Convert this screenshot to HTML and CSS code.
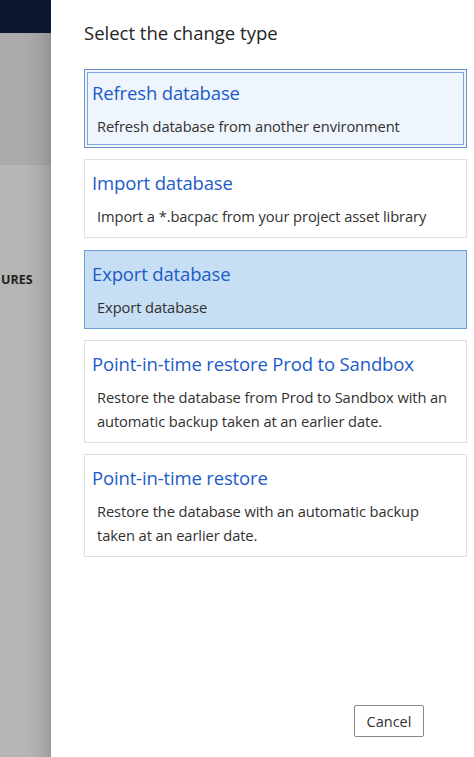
FILE: index.html
```html
<!DOCTYPE html>
<html lang="en">
<head>
<meta charset="utf-8">
<title>Select the change type</title>
<link rel="stylesheet" href="styles.css">
</head>
<body>
<div class="page">
  <aside class="backdrop">
    <div class="bd-top"></div>
    <div class="bd-mid"></div>
    <div class="bd-low">
      <div class="bd-label">URES</div>
    </div>
  </aside>
  <main class="panel">
    <h1 class="heading">Select the change type</h1>
    <div class="options">
      <div class="option focused">
        <div class="opt-title">Refresh database</div>
        <div class="opt-desc">Refresh database from another environment</div>
      </div>
      <div class="option">
        <div class="opt-title">Import database</div>
        <div class="opt-desc">Import a *.bacpac from your project asset library</div>
      </div>
      <div class="option selected">
        <div class="opt-title">Export database</div>
        <div class="opt-desc">Export database</div>
      </div>
      <div class="option">
        <div class="opt-title">Point-in-time restore Prod to Sandbox</div>
        <div class="opt-desc">Restore the database from Prod to Sandbox with an automatic backup taken at an earlier date.</div>
      </div>
      <div class="option">
        <div class="opt-title">Point-in-time restore</div>
        <div class="opt-desc">Restore the database with an automatic backup taken at an earlier date.</div>
      </div>
    </div>
    <div class="footer">
      <button class="btn">Cancel</button>
    </div>
  </main>
</div>
</body>
</html>
```

FILE: styles.css
```css
html, body {
  margin: 0;
  padding: 0;
  height: 100%;
}
body {
  font-family: "Open Sans", "Noto Sans", "Liberation Sans", sans-serif;
  color: #323130;
  background: #fff;
  overflow: hidden;
}
.page {
  display: flex;
  height: 757px;
}
.backdrop {
  width: 51px;
  flex: none;
  display: flex;
  flex-direction: column;
  position: relative;
}
.backdrop::after {
  content: "";
  position: absolute;
  inset: 33px 0 0 0;
  background: linear-gradient(to right, rgba(0,0,0,0) 0%, rgba(0,0,0,0) 55%, rgba(0,0,0,0.07) 85%, rgba(0,0,0,0.14) 100%);
  pointer-events: none;
}
.bd-top {
  height: 33px;
  background: #0c1832;
}
.bd-mid {
  height: 132px;
  background: #abaaaa;
}
.bd-low {
  flex: 1;
  background: #b5b5b5;
  padding-top: 106px;
}
.bd-label {
  padding-left: 1px;
  white-space: nowrap;
  font-size: 12.5px;
  font-weight: 700;
  color: #1f1f1f;
  line-height: 18px;
}
.panel {
  flex: 1;
  display: flex;
  flex-direction: column;
  padding: 0 7px 0 33px;
}
.heading {
  margin: 20px 0 0 0;
  font-size: 18.5px;
  font-weight: 400;
  line-height: 26px;
  color: #252423;
}
.options {
  margin-top: 23px;
  display: flex;
  flex-direction: column;
  gap: 11.3px;
}
.option {
  border: 1px solid #e1dfdd;
  background: #fff;
  padding: 10px 14px 9px 7px;
}
.option.focused {
  background: #eef5fd;
  border-color: #6c8fc6;
  box-shadow: inset 0 0 0 2px #eef5fd, inset 0 0 0 3px #7ea4df;
}
.option.selected {
  background: #c7dff4;
  border-color: #6b9fd6;
}
.opt-title {
  font-size: 18.5px;
  line-height: 26px;
  color: #1d5bc8;
  letter-spacing: -0.15px;
  white-space: nowrap;
}
.opt-desc {
  margin-top: 8px;
  padding-left: 5px;
  font-size: 14.7px;
  line-height: 24px;
  color: #323130;
  letter-spacing: -0.1px;
}
.footer {
  margin-top: auto;
  margin-bottom: 20px;
  display: flex;
  justify-content: flex-end;
  padding-right: 43px;
}
.btn {
  font-family: inherit;
  font-size: 14.5px;
  color: #323130;
  background: #fff;
  border: 1px solid #8a8886;
  border-radius: 2px;
  height: 32px;
  width: 70px;
  padding: 0;
  cursor: pointer;
}
```
